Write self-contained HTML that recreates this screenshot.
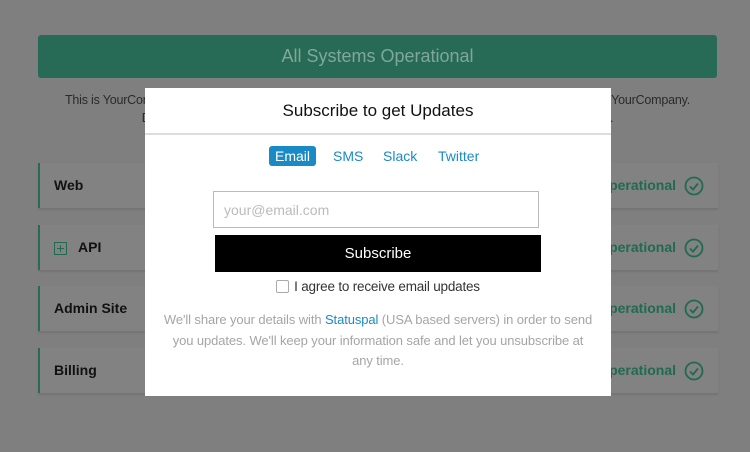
<!DOCTYPE html>
<html><head><style>
body{margin:0;width:750px;height:452px;background:#7f7f7f;font-family:"Liberation Sans",sans-serif;position:relative;overflow:hidden}
.banner{position:absolute;left:38px;top:35px;width:679px;height:43px;background:#276a55;border-radius:3px;color:#7fa898;font-size:18px;text-align:center;line-height:43px}
.desc{position:absolute;left:38px;width:679px;text-align:center;color:#2a2a2a;font-size:12.5px;line-height:18px;top:91px;letter-spacing:-0.2px}
.row{position:absolute;left:38px;width:678px;height:45px;background:#828282;border-left:2px solid #276a55;box-shadow:0 2px 1px #747474}
.row .n{position:absolute;left:14px;top:0;line-height:45px;font-size:14px;color:#111;font-weight:bold}
.row .s{position:absolute;right:42px;line-height:45px;font-size:14px;color:#1f6b50;font-weight:bold}
.row svg{position:absolute;right:14px;top:13px}
.modal{position:absolute;left:145px;top:88px;width:466px;height:308px;background:#fff}
.title{position:absolute;top:0;width:100%;height:45px;line-height:46px;text-align:center;font-size:17px;color:#111;border-bottom:2px solid #ddd}
.tabs{position:absolute;top:58px;left:124px;font-size:14px;white-space:nowrap}
.tabs span{position:absolute;top:0;color:#1a8ac4;line-height:20px}
.tabs span.a{background:#1a8ac4;color:#fff;border-radius:3px;padding:0 6px}
.inp{position:absolute;left:68px;top:103px;color:#bbb;font-size:14px;line-height:36px;padding-left:10px;box-sizing:border-box;width:326px;height:37px;border:1px solid #bbb}
.btn{position:absolute;left:70px;top:147px;width:326px;height:37px;background:#000;color:#fff;font-size:15px;text-align:center;line-height:37px}
.chk{position:absolute;top:191px;width:100%;text-align:center;font-size:13.5px;color:#333;letter-spacing:-0.2px}
.chk i{display:inline-block;width:11px;height:11px;border:1px solid #aaa;border-radius:2px;vertical-align:-2px;margin-right:5px}
.note{position:absolute;top:222px;left:0;right:0;text-align:center;font-size:13px;line-height:20.5px;color:#a5a5a5;letter-spacing:-0.1px;white-space:nowrap}
.note b{font-weight:normal;color:#1a8ac4}
</style></head><body>
<div class="banner">All Systems Operational</div>
<div class="desc">This is YourCompany's status page. Here you can get updated information on the status of services of YourCompany.<br>Do you have any questions? Don't hesitate to contact us at support@yourcompany.com.</div>
<div class="row" style="top:163px"><div class="n">Web</div><div class="s">Operational</div><svg width="20" height="20" viewBox="0 0 20 20"><circle cx="10" cy="10" r="8.5" fill="none" stroke="#1f6b50" stroke-width="1.8"/><path d="M6 10.5l3 3 5-6" fill="none" stroke="#1f6b50" stroke-width="1.8"/></svg></div>
<div class="row" style="top:225px"><div class="n" style="left:38px">API</div><svg style="left:14px;top:17px" width="13" height="13" viewBox="0 0 13 13"><rect x=".5" y=".5" width="12" height="12" fill="none" stroke="#1f6b50"/><path d="M6.5 3v7M3 6.5h7" stroke="#1f6b50"/></svg><div class="s">Operational</div><svg width="20" height="20" viewBox="0 0 20 20"><circle cx="10" cy="10" r="8.5" fill="none" stroke="#1f6b50" stroke-width="1.8"/><path d="M6 10.5l3 3 5-6" fill="none" stroke="#1f6b50" stroke-width="1.8"/></svg></div>
<div class="row" style="top:286px"><div class="n">Admin Site</div><div class="s">Operational</div><svg width="20" height="20" viewBox="0 0 20 20"><circle cx="10" cy="10" r="8.5" fill="none" stroke="#1f6b50" stroke-width="1.8"/><path d="M6 10.5l3 3 5-6" fill="none" stroke="#1f6b50" stroke-width="1.8"/></svg></div>
<div class="row" style="top:348px"><div class="n">Billing</div><div class="s">Operational</div><svg width="20" height="20" viewBox="0 0 20 20"><circle cx="10" cy="10" r="8.5" fill="none" stroke="#1f6b50" stroke-width="1.8"/><path d="M6 10.5l3 3 5-6" fill="none" stroke="#1f6b50" stroke-width="1.8"/></svg></div>
<div class="modal">
<div class="title">Subscribe to get Updates</div>
<div class="tabs"><span class="a" style="left:0">Email</span><span style="left:64px">SMS</span><span style="left:114px">Slack</span><span style="left:169px">Twitter</span></div>
<div class="inp">your@email.com</div>
<div class="btn">Subscribe</div>
<div class="chk"><i></i>I agree to receive email updates</div>
<div class="note">We'll share your details with <b>Statuspal</b> (USA based servers) in order to send<br>you updates. We'll keep your information safe and let you unsubscribe at<br>any time.</div>
</div>
</body></html>
